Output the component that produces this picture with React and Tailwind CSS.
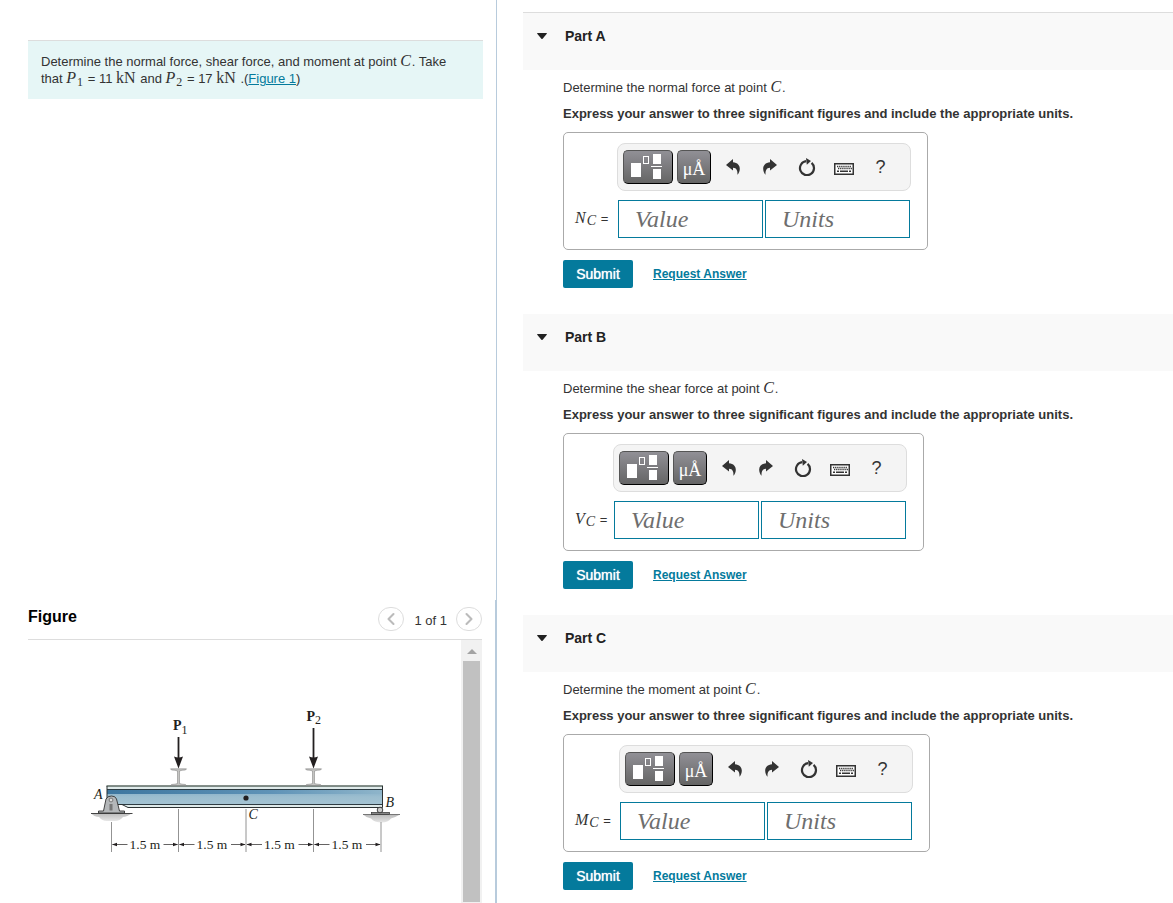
import { Fragment } from 'react';
import { FiChevronLeft, FiChevronRight } from 'react-icons/fi';

const parts = [
  { id: 'a', title: 'Part A', quantity: 'normal force', symbol: 'N', labelWidth: 'w-[42px]' },
  { id: 'b', title: 'Part B', quantity: 'shear force', symbol: 'V', labelWidth: 'w-[38px]' },
  { id: 'c', title: 'Part C', quantity: 'moment', symbol: 'M', labelWidth: 'w-[44px]' },
];

const serif = "font-['Liberation_Serif',serif]";

// Inline math, a little larger than the text around it
const MathText = ({ children, upright }) => (
  <span className={`${serif} mr-px text-[16px] leading-4 ${upright ? '' : 'italic'}`}>{children}</span>
);

const Sub = ({ children }) => (
  <span className={`${serif} relative top-[3px] mr-px text-[12px] leading-3`}>{children}</span>
);

const TemplateIcon = () => (
  <svg width="34" height="26" viewBox="0 0 34 26" aria-hidden="true" className="shrink-0">
    <rect x="0" y="9" width="10" height="14" fill="#fff" />
    <rect x="12.5" y="2.5" width="5" height="7" fill="none" stroke="#fff" />
    <rect x="22" y="0" width="8" height="10" fill="#fff" />
    <rect x="20" y="12" width="11" height="1" fill="#fff" />
    <rect x="22" y="15" width="8" height="10" fill="#fff" />
  </svg>
);

const UndoIcon = ({ flipped }) => (
  <svg width="14" height="16" viewBox="0 0 14 16" fill="#333" aria-hidden="true" className={flipped ? '-scale-x-100' : ''}>
    <path d="M0 6L7 0V3.2C11.5 3.5 14 6.5 13.8 10c-.1 2.4-1 4.4-2.4 5.8.4-3.7-.6-6.9-4.4-7V11.5Z" />
  </svg>
);

const ResetIcon = () => (
  <svg width="18" height="18" viewBox="0 0 18 18" aria-hidden="true">
    <path d="M13.6 4.9A7 7 0 1 1 8.2 3.2" fill="none" stroke="#333" strokeWidth="2.2" />
    <path d="M8 0l5 3-4.2 3.8z" fill="#333" />
  </svg>
);

const KeyboardIcon = () => (
  <svg width="20" height="12" viewBox="0 0 20 12" aria-hidden="true">
    <rect x="0.75" y="0.75" width="18.5" height="10.5" fill="#fff" stroke="#333" strokeWidth="1.5" />
    <path d="M3 3.5h14M4 5.5h14" stroke="#333" strokeWidth="1.4" strokeDasharray="1.3 0.8" />
    <path d="M3 8.3h2M6 8.3h8M15 8.3h2" stroke="#333" strokeWidth="1.4" />
  </svg>
);

const darkButton =
  'flex h-[34px] items-center justify-center rounded-[5px] border border-r-black border-b-black border-t-[#555] border-l-[#555] bg-linear-to-b from-[#919096] to-[#656565] text-white';
const toolButton = 'flex h-[34px] w-[37px] items-center justify-center text-[#333]';

const Toolbar = () => (
  <div className="flex h-12 items-center rounded-lg border border-[#ddd] bg-[#f4f4f4] pr-[11px] pl-[5px]">
    <button type="button" aria-label="Templates" className={`${darkButton} w-[50px]`}>
      <TemplateIcon />
    </button>
    <button type="button" aria-label="Symbols" className={`${darkButton} ${serif} ml-1 w-[34px] pt-1 text-[18px]`}>
      μÅ
    </button>
    <button type="button" aria-label="Undo" className={`${toolButton} ml-[3px]`}><UndoIcon /></button>
    <button type="button" aria-label="Redo" className={toolButton}><UndoIcon flipped /></button>
    <button type="button" aria-label="Reset" className={toolButton}><ResetIcon /></button>
    <button type="button" aria-label="Keyboard shortcuts" className={`${toolButton} pt-1`}><KeyboardIcon /></button>
    <button type="button" aria-label="Help" className={`${toolButton} text-lg`}>?</button>
  </div>
);

const answerInput =
  "h-[38px] w-[145px] border border-[#047a9c] bg-white pl-4 pr-2 font-['Liberation_Serif',serif] text-2xl italic text-[#333] placeholder:text-[#6e6e6e] outline-none";

const Part = ({ id, title, quantity, symbol, labelWidth }) => (
  <section>
    <header className="flex items-center gap-[18px] bg-[#f9f9f9] pt-[13px] pb-6 pl-3.5">
      <svg width="10" height="6" viewBox="0 0 10 6" aria-hidden="true">
        <path d="M0 0.5Q0 0 .7 0h8.6q.7 0 .7.5L5.6 5.7q-.6.5-1.2 0z" fill="#222" />
      </svg>
      <h2 className="text-sm leading-5 font-bold text-[#222]">{title}</h2>
    </header>

    <div className="pt-[9px] pb-[26px] pl-10">
      <p className="leading-[18px]">
        Determine the {quantity} at point <MathText>C</MathText>.
      </p>
      <p className="mt-2 leading-[18px] font-bold">
        Express your answer to three significant figures and include the appropriate units.
      </p>

      <div className="mt-[9px] flex w-fit items-end rounded-[5px] border border-[#aaa] pt-2.5 pr-4 pb-[11px] pl-[11px]">
        <label htmlFor={`value-${id}`} className={`${labelWidth} h-[38px] leading-[38px] whitespace-nowrap`}>
          <MathText>{symbol}</MathText>
          <span className={`${serif} relative top-0.5 mr-px text-[14px] leading-3 italic`}>C</span> =
        </label>
        <div>
          <Toolbar />
          <div className="mt-[9px] flex gap-0.5 px-px">
            <input id={`value-${id}`} type="text" placeholder="Value" className={answerInput} />
            <input type="text" aria-label="Units" placeholder="Units" className={answerInput} />
          </div>
        </div>
      </div>

      <div className="mt-2.5 flex items-center gap-5">
        <button type="button" className="h-7 w-[70px] rounded-xs bg-[#047a9c] text-sm text-white [text-shadow:0_0_1px_#fff]">
          Submit
        </button>
        <a href="#request" className="text-xs font-bold text-[#047a9c] underline">Request Answer</a>
      </div>
    </div>
  </section>
);

const supports = [111.5, 178.5, 246, 313.5, 381];

const BeamFigure = () => (
  <svg width="316" height="160" viewBox="88 700 316 160" role="img" aria-label="Beam AB" fontFamily="'Liberation Serif', serif" fill="#231f20">
    <defs>
      <linearGradient id="web" x1="0" y1="0" x2="0" y2="1">
        <stop offset="0" stopColor="#7fabc6" />
        <stop offset="0.5" stopColor="#9bbdcf" />
        <stop offset="1" stopColor="#a4c3d2" />
      </linearGradient>
      <linearGradient id="shade" x1="0" y1="0" x2="1" y2="0">
        <stop offset="0" stopColor="#3d769f" />
        <stop offset="0.6" stopColor="#5f93b7" />
        <stop offset="1" stopColor="#8fb5ca" />
      </linearGradient>
      <linearGradient id="ground" x1="0" y1="0" x2="0" y2="1">
        <stop offset="0" stopColor="#b9b9b9" />
        <stop offset="1" stopColor="#e6e6e6" />
      </linearGradient>
    </defs>

    {/* ground */}
    <path d="M91 813h41q-5 4-9 4-3 4-8 4t-8 0q-5 0-8-4-5 0-8-4z" fill="url(#ground)" />
    <path d="M363 814.500h37q-5 3-9 4-3 4-9 4-8 0-11-4-5-1-8-4z" fill="url(#ground)" />

    {/* extension lines */}
    {supports.map((x, i) => (
      <path key={x} d={`M${x} ${i === 0 || i === 4 ? 822 : 809}V852`} stroke="#777" strokeWidth="0.8" />
    ))}

    {/* beam */}
    <path d="M107 786H382.500V808H128L122 804H107z" fill="#dfeaea" />
    <rect x="107" y="789.5" width="275.5" height="14.5" fill="url(#web)" />
    <rect x="107" y="789.5" width="275.5" height="4.5" fill="url(#shade)" />
    <path d="M107 789.5H382M122 804.5H382" stroke="#2d3b42" strokeWidth="1" fill="none" />
    <path d="M106.500 786H383" stroke="#5d6a63" strokeWidth="1.600" />
    <path d="M107 786V804.500H122L128 807.500H382.500V786" stroke="#2b3133" strokeWidth="1" fill="none" />
    <circle cx="246" cy="798" r="2.6" />

    {/* loads and the small beams they rest on */}
    {[{ x: 178.5, y: 737 }, { x: 313.5, y: 728 }].map(({ x, y }) => (
      <Fragment key={x}>
        <path d={`M${x} ${y}V760`} stroke="#231f20" strokeWidth="1.8" />
        <path
          d={`M${x - 8} 768.8h16l-1 1.200q-4 0-6 1v12.500q2 .8 6 1l1 1h-16l1-1q4-.2 6-1v-12.500q-2-1-6-1z`}
          fill="#c4c4c2"
          stroke="#777"
          strokeWidth="0.500"
        />
        <path d={`M${x} 768.500l-4.500-12q4.500 2 9 0z`} />
      </Fragment>
    ))}

    {/* pin support */}
    <path d="M91 813.500H132.500" stroke="#444" />
    <path d="M98.500 813v-2h5l2.500-12q1.500-3 5.500-3t5 3l3 12h5v2z" fill="#b4b7b9" stroke="#333" strokeWidth="0.900" />
    <circle cx="111" cy="800" r="1.900" fill="#ddd" stroke="#555" strokeWidth="0.700" />
    <rect x="109.500" y="804" width="3" height="6.500" fill="#777" />

    {/* roller support */}
    <path d="M363 814.500H400" stroke="#777" />
    <rect x="371.500" y="812.500" width="18" height="2" fill="#888" stroke="#333" strokeWidth="0.700" />
    <circle cx="380" cy="810" r="2.800" fill="#ccc" stroke="#333" strokeWidth="0.900" />

    {/* dimensions */}
    {supports.slice(0, 4).map((x, i) => {
      const end = supports[i + 1];
      return (
        <Fragment key={x}>
          <path d={`M${x + 1} 844.500h15M${end - 15} 844.500h14`} stroke="#231f20" strokeWidth="0.700" />
          <path d={`M${x + 0.5} 844.500l5-1.700v3.400zM${end - 0.5} 844.500l-5-1.700v3.400z`} />
          <text x={x + 18} y="849" fontSize="13.5">1.5 m</text>
        </Fragment>
      );
    })}

    <text x="173" y="730" fontSize="14" fontWeight="bold">P</text>
    <text x="181.500" y="734" fontSize="12">1</text>
    <text x="306.500" y="721" fontSize="14" fontWeight="bold">P</text>
    <text x="315" y="724" fontSize="12">2</text>
    <g fontSize="14" fontStyle="italic">
      <text x="94" y="799">A</text>
      <text x="248.500" y="819">C</text>
      <text x="385.500" y="807">B</text>
    </g>
  </svg>
);

const navButton = 'flex h-6 w-[26px] items-center justify-center rounded-full border border-[#ddd] text-[#bbb]';

const FigurePanel = () => (
  <section className="flex h-[303px] shrink-0 flex-col border-r-2 border-[#b8cbdc] pr-[13px] pl-7">
    <div className="flex h-10 shrink-0 items-start justify-between border-b border-[#ddd]">
      <h2 className="pt-[5px] text-base font-bold text-black">Figure</h2>
      <div className="flex items-center pt-[7px]">
        <button type="button" aria-label="Previous figure" className={navButton}>
          <FiChevronLeft size={20} strokeWidth={2.5} className="shrink-0" />
        </button>
        <span className="pt-[3px] pr-[9px] pl-2.5 leading-4">1 of 1</span>
        <button type="button" aria-label="Next figure" className={navButton}>
          <FiChevronRight size={20} strokeWidth={2.5} className="shrink-0" />
        </button>
      </div>
    </div>
    <div className="flex min-h-0 flex-1">
      <div className="min-w-0 flex-1 overflow-hidden pt-[60px] pl-[60px]">
        <BeamFigure />
      </div>
      {/* scrollbar */}
      <div className="flex w-[21px] flex-col items-center bg-[#f1f1f1] pb-px">
        <div className="flex h-[21px] shrink-0 items-center pt-0.5">
          <svg width="10" height="5" viewBox="0 0 10 5" aria-hidden="true"><path d="M0 5l5-5 5 5z" fill="#a3a3a3" /></svg>
        </div>
        <div className="w-[17px] flex-1 bg-[#c1c1c1]" />
      </div>
    </div>
  </section>
);

const App = () => {
  return (
    <div className="flex h-screen bg-white font-['Liberation_Sans',Arial,sans-serif] text-[13px] text-[#333]">
      <aside className="flex w-[497px] shrink-0 flex-col">
        <div className="min-h-0 flex-1 border-r border-[#b8cbdc] pt-10 pr-[13px] pl-7">
          <p className="border-t border-[#ddd] bg-[#e6f6f6] px-[13px] pt-3 pb-3 leading-4">
            Determine the normal force, shear force, and moment at point <MathText>C</MathText>. Take that{' '}
            <MathText>P</MathText><Sub>1</Sub> = 11 <MathText upright>kN</MathText> and{' '}
            <MathText>P</MathText><Sub>2</Sub> = 17 <MathText upright>kN</MathText> .(
            <a href="#figure" className="text-[#047a9c] underline">Figure 1</a>)
          </p>
        </div>
        <FigurePanel />
      </aside>

      <main className="min-w-0 flex-1 overflow-y-auto pt-3 pl-[26px]">
        <div className="border-t border-[#ddd] [&>section:last-child>div]:pb-0">
          {parts.map((part) => (
            <Part key={part.id} {...part} />
          ))}
        </div>
      </main>
    </div>
  );
};

export default App;
